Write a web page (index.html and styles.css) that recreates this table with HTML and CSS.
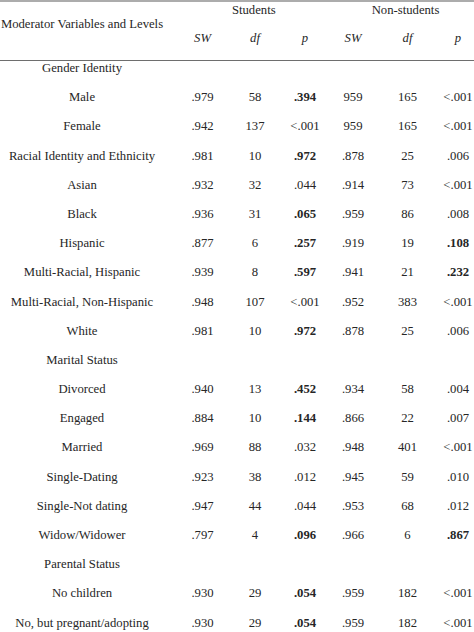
FILE: index.html
```html
<!DOCTYPE html>
<html>
<head>
<meta charset="utf-8">
<link rel="stylesheet" href="styles.css">
</head>
<body>
<div class="table">
  <div class="head">
    <div class="head-label">Moderator Variables and Levels</div>
    <div class="head-groups">
      <div class="group-row">
        <div class="group students">Students</div>
        <div class="group nonstudents">Non-students</div>
      </div>
      <div class="stat-row">
        <span class="cell c1 it">SW</span>
        <span class="cell c2 it">df</span>
        <span class="cell c3 it">p</span>
        <span class="cell c4 it">SW</span>
        <span class="cell c5 it">df</span>
        <span class="cell c6 it">p</span>
      </div>
    </div>
  </div>
  <div class="body">
    <div class="row"><div class="label">Gender Identity</div></div>
    <div class="row"><div class="label">Male</div><span class="cell c1">.979</span><span class="cell c2">58</span><span class="cell c3 b">.394</span><span class="cell c4">959</span><span class="cell c5">165</span><span class="cell c6">&lt;.001</span></div>
    <div class="row"><div class="label">Female</div><span class="cell c1">.942</span><span class="cell c2">137</span><span class="cell c3">&lt;.001</span><span class="cell c4">959</span><span class="cell c5">165</span><span class="cell c6">&lt;.001</span></div>
    <div class="row"><div class="label">Racial Identity and Ethnicity</div><span class="cell c1">.981</span><span class="cell c2">10</span><span class="cell c3 b">.972</span><span class="cell c4">.878</span><span class="cell c5">25</span><span class="cell c6">.006</span></div>
    <div class="row"><div class="label">Asian</div><span class="cell c1">.932</span><span class="cell c2">32</span><span class="cell c3">.044</span><span class="cell c4">.914</span><span class="cell c5">73</span><span class="cell c6">&lt;.001</span></div>
    <div class="row"><div class="label">Black</div><span class="cell c1">.936</span><span class="cell c2">31</span><span class="cell c3 b">.065</span><span class="cell c4">.959</span><span class="cell c5">86</span><span class="cell c6">.008</span></div>
    <div class="row"><div class="label">Hispanic</div><span class="cell c1">.877</span><span class="cell c2">6</span><span class="cell c3 b">.257</span><span class="cell c4">.919</span><span class="cell c5">19</span><span class="cell c6 b">.108</span></div>
    <div class="row"><div class="label">Multi-Racial, Hispanic</div><span class="cell c1">.939</span><span class="cell c2">8</span><span class="cell c3 b">.597</span><span class="cell c4">.941</span><span class="cell c5">21</span><span class="cell c6 b">.232</span></div>
    <div class="row"><div class="label">Multi-Racial, Non-Hispanic</div><span class="cell c1">.948</span><span class="cell c2">107</span><span class="cell c3">&lt;.001</span><span class="cell c4">.952</span><span class="cell c5">383</span><span class="cell c6">&lt;.001</span></div>
    <div class="row"><div class="label">White</div><span class="cell c1">.981</span><span class="cell c2">10</span><span class="cell c3 b">.972</span><span class="cell c4">.878</span><span class="cell c5">25</span><span class="cell c6">.006</span></div>
    <div class="row"><div class="label">Marital Status</div></div>
    <div class="row"><div class="label">Divorced</div><span class="cell c1">.940</span><span class="cell c2">13</span><span class="cell c3 b">.452</span><span class="cell c4">.934</span><span class="cell c5">58</span><span class="cell c6">.004</span></div>
    <div class="row"><div class="label">Engaged</div><span class="cell c1">.884</span><span class="cell c2">10</span><span class="cell c3 b">.144</span><span class="cell c4">.866</span><span class="cell c5">22</span><span class="cell c6">.007</span></div>
    <div class="row"><div class="label">Married</div><span class="cell c1">.969</span><span class="cell c2">88</span><span class="cell c3">.032</span><span class="cell c4">.948</span><span class="cell c5">401</span><span class="cell c6">&lt;.001</span></div>
    <div class="row"><div class="label">Single-Dating</div><span class="cell c1">.923</span><span class="cell c2">38</span><span class="cell c3">.012</span><span class="cell c4">.945</span><span class="cell c5">59</span><span class="cell c6">.010</span></div>
    <div class="row"><div class="label">Single-Not dating</div><span class="cell c1">.947</span><span class="cell c2">44</span><span class="cell c3">.044</span><span class="cell c4">.953</span><span class="cell c5">68</span><span class="cell c6">.012</span></div>
    <div class="row"><div class="label">Widow/Widower</div><span class="cell c1">.797</span><span class="cell c2">4</span><span class="cell c3 b">.096</span><span class="cell c4">.966</span><span class="cell c5">6</span><span class="cell c6 b">.867</span></div>
    <div class="row"><div class="label">Parental Status</div></div>
    <div class="row"><div class="label">No children</div><span class="cell c1">.930</span><span class="cell c2">29</span><span class="cell c3 b">.054</span><span class="cell c4">.959</span><span class="cell c5">182</span><span class="cell c6">&lt;.001</span></div>
    <div class="row"><div class="label">No, but pregnant/adopting</div><span class="cell c1">.930</span><span class="cell c2">29</span><span class="cell c3 b">.054</span><span class="cell c4">.959</span><span class="cell c5">182</span><span class="cell c6">&lt;.001</span></div>
  </div>
</div>
</body>
</html>
```

FILE: styles.css
```css
html, body {
  margin: 0;
  padding: 0;
  overflow: hidden;
  background: #ffffff;
}

body {
  width: 474px;
  font-family: "Liberation Serif", "Times New Roman", serif;
  font-size: 12.7px;
  color: #262626;
}

.table {
  width: 474px;
  border-top: 2px solid #acacac;
}

.head {
  display: flex;
  height: 58px;
  border-bottom: 1px solid #6e6e6e;
}

.head-label {
  flex: none;
  width: 164px;
  align-self: center;
  padding-bottom: 15px;
  line-height: 16px;
  text-align: center;
  white-space: nowrap;
}

.head-groups {
  flex: none;
  display: flex;
  flex-direction: column;
}

.group-row {
  display: flex;
  height: 16px;
  line-height: 16px;
}

.group {
  flex: none;
  text-align: center;
  white-space: nowrap;
}

.students {
  margin-left: 18.5px;
  width: 142.5px;
}

.nonstudents {
  margin-left: 8px;
  width: 145px;
}

.stat-row {
  display: flex;
  padding-top: 12px;
  line-height: 16px;
}

.row {
  display: flex;
  height: 29.2px;
  line-height: 14px;
}

.label {
  flex: none;
  width: 164px;
  text-align: center;
  white-space: nowrap;
}

.cell {
  flex: none;
  width: 40px;
  text-align: center;
  white-space: nowrap;
}

.c1 { margin-left: 18.5px; }
.c2 { margin-left: 12.5px; }
.c3 { margin-left: 10px; }
.c4 { margin-left: 8px; }
.c5 { margin-left: 14.5px; }
.c6 { margin-left: 10.5px; }

.it {
  font-style: italic;
}

.b {
  font-weight: bold;
}
```
